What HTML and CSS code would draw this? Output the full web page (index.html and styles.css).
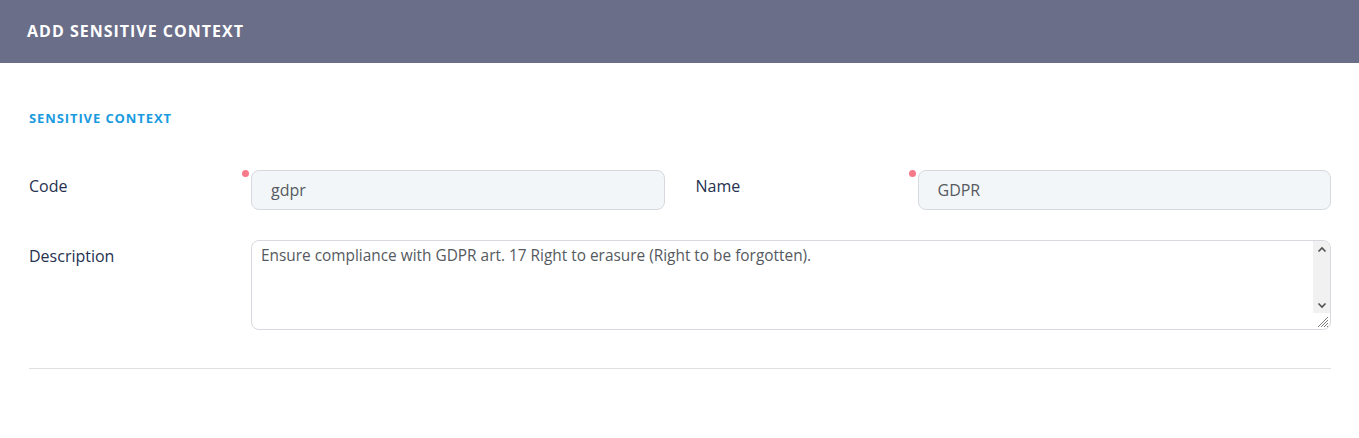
FILE: index.html
```html
<!DOCTYPE html>
<html lang="en">
<head>
<meta charset="utf-8">
<title>Add Sensitive Context</title>
<link rel="stylesheet" href="styles.css">
</head>
<body>
<div class="modal">
  <header class="modal-header">
    <h1 class="modal-title">Add Sensitive Context</h1>
  </header>
  <div class="modal-body">
    <h2 class="section-title">Sensitive Context</h2>
    <div class="form-row">
      <div class="field">
        <label class="field-label">Code</label>
        <div class="control required">
          <input class="input" type="text" value="gdpr">
        </div>
      </div>
      <div class="field">
        <label class="field-label">Name</label>
        <div class="control required">
          <input class="input" type="text" value="GDPR">
        </div>
      </div>
    </div>
    <div class="form-row">
      <div class="field field-wide">
        <label class="field-label">Description</label>
        <div class="control">
          <textarea class="textarea">Ensure compliance with GDPR art. 17 Right to erasure (Right to be forgotten).</textarea>
          <div class="fake-scrollbar">
            <svg class="arrow" width="10" height="8" viewBox="0 0 10 8"><path d="M1.5 5.5 L5 2 L8.5 5.5" fill="none" stroke="#505050" stroke-width="1.6"/></svg>
            <svg class="arrow" width="10" height="8" viewBox="0 0 10 8"><path d="M1.5 2.5 L5 6 L8.5 2.5" fill="none" stroke="#505050" stroke-width="1.6"/></svg>
          </div>
          <svg class="grip" width="14" height="14" viewBox="0 0 14 14"><path d="M13 3 L3 13 M13 6 L6 13 M13 9 L9 13 M13 12 L12 13" stroke="#7a7a7a" stroke-width="1"/></svg>
        </div>
      </div>
    </div>
    <hr class="divider">
  </div>
</div>
</body>
</html>
```
FILE: styles.css
```css
* { box-sizing: border-box; }
html, body { margin: 0; padding: 0; background: #ffffff; }
body { font-family: "Open Sans", "Noto Sans", sans-serif; }

.modal-header {
  height: 63px;
  background: #6b6e89;
  display: flex;
  align-items: center;
  padding-left: 27px;
}
.modal-title {
  margin: 0 0 1px 0;
  color: #ffffff;
  font-size: 16px;
  font-weight: 700;
  letter-spacing: 1px;
  text-transform: uppercase;
}

.modal-body {
  padding: 47px 28px 0 29px;
}
.section-title {
  margin: 0 0 44px 0;
  color: #1a9be0;
  font-size: 13px;
  font-weight: 700;
  letter-spacing: 0.9px;
  text-transform: uppercase;
  line-height: 16px;
}

.form-row {
  display: flex;
  gap: 31px;
  margin-bottom: 30px;
}
.field {
  flex: 1;
  display: flex;
}
.field-label {
  width: 222px;
  flex: none;
  padding-top: 6px;
  line-height: 20px;
  font-size: 16px;
  color: #26314f;
}
.control {
  flex: 1;
  position: relative;
}
.control.required::before {
  content: "";
  position: absolute;
  left: -9px;
  top: 0;
  width: 7px;
  height: 7px;
  border-radius: 50%;
  background: #f7798a;
}
.input {
  display: block;
  width: 100%;
  height: 40px;
  border: 1px solid #d6d9dd;
  border-radius: 8px;
  background: #f3f6f9;
  padding: 0 19px;
  font-family: "Open Sans", sans-serif;
  font-size: 16px;
  color: #555a60;
  outline: none;
}
.textarea {
  display: block;
  width: 100%;
  height: 90px;
  border: 1px solid #d6d9dd;
  border-radius: 8px;
  background: #ffffff;
  padding: 5px 26px 5px 9px;
  font-family: "Open Sans", sans-serif;
  font-size: 15.4px;
  line-height: 20px;
  color: #555a60;
  overflow: hidden;
  resize: none;
  outline: none;
}
.fake-scrollbar {
  position: absolute;
  right: 1px;
  top: 1px;
  width: 17px;
  height: 72px;
  background: #f1f1f1;
  border-top-right-radius: 7px;
  display: flex;
  flex-direction: column;
  justify-content: space-between;
  align-items: center;
  padding: 5px 0 4px 0;
}
.arrow { display: block; }
.grip {
  position: absolute;
  right: 2px;
  bottom: 2px;
}
.divider {
  border: 0;
  border-top: 1px solid #dde0e3;
  margin: 38px 0 0 0;
}
```
